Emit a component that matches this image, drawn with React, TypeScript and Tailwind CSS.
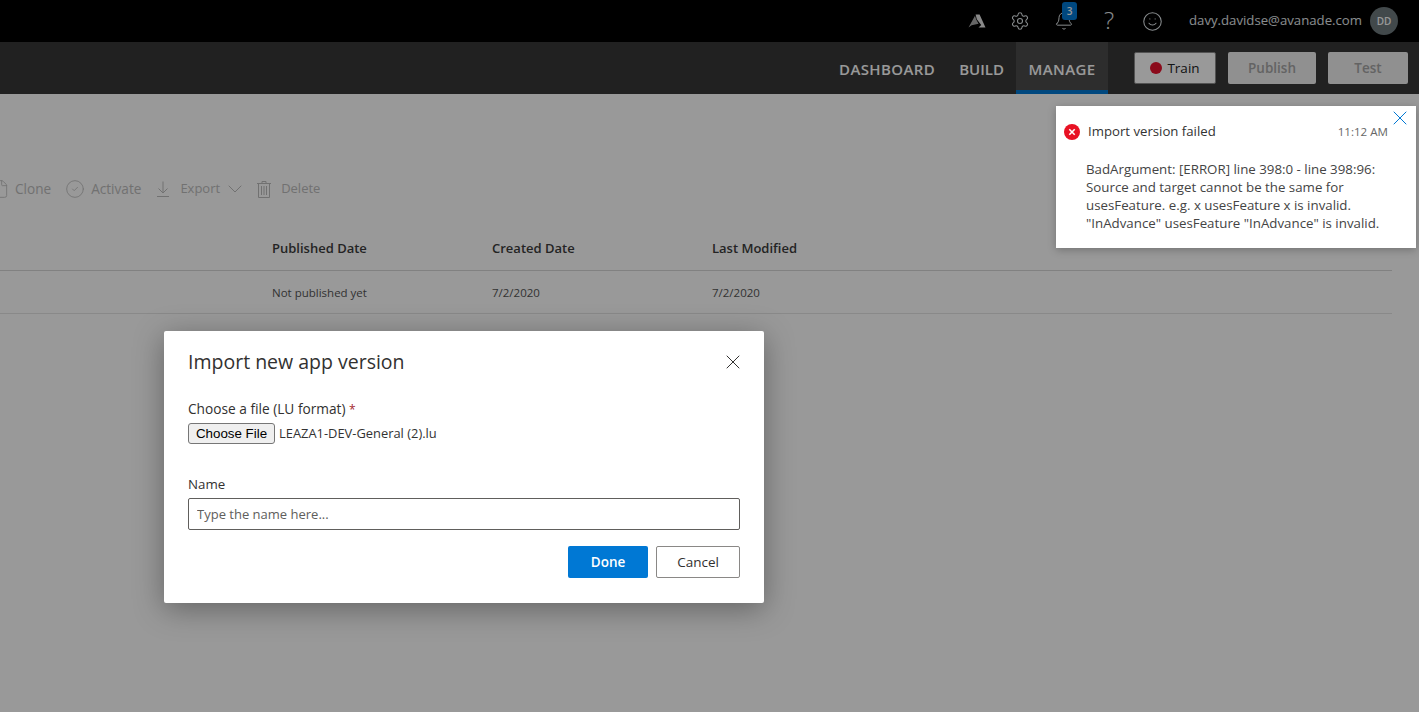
import { Bell, ChevronDown, CircleCheck, File, Settings, Smile, X } from "lucide-react"

const font = { fontFamily: '"Open Sans", "Noto Sans", sans-serif' }

function AzureLogo() {
  return (
    <svg width="18" height="14" viewBox="0 0 18 14" fill="#e4e4e4">
      <path d="M7.6 0.5 L11.6 0.5 L17.5 13.5 L10.5 13.5 L13.2 11 L8.8 5.2 Z" />
      <path d="M7 1.8 L8.2 5.4 L10.6 9.8 L3.6 11.2 L0.5 13.5 Z" opacity="0.75" />
    </svg>
  )
}

function ExportArrow() {
  return (
    <svg width="12" height="16" viewBox="0 0 12 16" fill="none" stroke="currentColor" strokeWidth="1" className="mr-[11px]">
      <path d="M6 0.5 V12 M1.5 7.5 L6 12 L10.5 7.5 M0 15.5 H12" />
    </svg>
  )
}

function TrashIcon() {
  return (
    <svg width="14" height="17" viewBox="0 0 14 17" fill="none" stroke="currentColor" strokeWidth="1" className="mr-[10px]">
      <path d="M0 2.5 H14 M5 2.5 V0.5 H9 V2.5 M1.5 2.5 V16.5 H12.5 V2.5 M4.5 5 V14 M7 5 V14 M9.5 5 V14" />
    </svg>
  )
}

function TopBar() {
  return (
    <div className="h-[42px] bg-black flex items-center justify-end text-[#e4eaed]">
      <div className="w-[18px] flex justify-center mr-[24px]"><AzureLogo /></div>
      <Settings size={20} strokeWidth={1.3} className="mr-[24px]" />
      <div className="relative mr-[28px]">
        <Bell size={20} strokeWidth={1.2} />
        <span className="absolute -top-[9px] left-[8px] w-[15px] h-[18px] rounded-[3px] bg-[#0078d4] text-white text-[10px] font-semibold flex items-center justify-center">3</span>
      </div>
      <span className="w-[14px] text-center text-[24px] leading-[24px] font-light -mt-[2px] mr-[26px]">?</span>
      <Smile size={21} strokeWidth={1.2} className="mr-[26px]" />
      <span className="text-[13.2px] mr-[8px]">davy.davidse@avanade.com</span>
      <div className="w-[28px] h-[28px] rounded-full bg-[#6e7a7e] text-white text-[10px] font-semibold flex items-center justify-center mr-[21px]">DD</div>
    </div>
  )
}

function NavBar() {
  return (
    <div className="h-[52px] bg-[#383838] flex items-stretch justify-end">
      <div className="flex items-center text-[15px] font-semibold text-white">
        <span className="px-3 mt-[3px] tracking-[0.4px]">DASHBOARD</span>
        <span className="px-3 mt-[3px]">BUILD</span>
        <div className="h-full w-[92px] bg-[#4c4c4c] border-b-4 border-[#0078d4] pt-[6px] flex items-center justify-center tracking-[0.4px]">MANAGE</div>
      </div>
      <div className="flex items-center gap-3 ml-[26px] mr-[11px]">
        <button className="w-[82px] h-[32px] bg-white border border-[#8a8a8a] rounded-[2px] flex items-center justify-center gap-[5px] text-[13.5px] font-medium text-[#222]">
          <span className="w-3 h-3 rounded-full bg-[#e8112d]" />
          Train
        </button>
        <button className="w-[88px] h-[32px] bg-[#f0f0f0] rounded-[2px] text-[13.5px] font-semibold text-[#a6a6a6]">Publish</button>
        <button className="w-[80px] h-[32px] bg-[#f0f0f0] rounded-[2px] text-[13.5px] font-semibold text-[#a6a6a6]">Test</button>
      </div>
    </div>
  )
}

function Toolbar() {
  return (
    <div className="flex items-center h-5 mt-[85px] -ml-[10px] text-[13.6px] text-[#bdbdbd]">
      <File size={20} strokeWidth={1} className="mr-[5px]" />
      <span className="mr-[14px]">Clone</span>
      <CircleCheck size={20} strokeWidth={1} className="mr-[6px]" />
      <span className="mr-[16px]">Activate</span>
      <ExportArrow />
      <span className="text-[13px] mr-[3px]">Export</span>
      <ChevronDown size={24} strokeWidth={1} className="mr-[10px]" />
      <TrashIcon />
      <span className="text-[13px]">Delete</span>
    </div>
  )
}

function VersionTable() {
  return (
    <div className="w-[1392px] mt-[26px]">
      <div className="h-[46px] pt-[2px] pl-[272px] grid grid-cols-[220px_220px_1fr] items-center border-b border-[#d8d8d8] text-[13px] font-semibold text-[#3c3c3c]">
        <span>Published Date</span>
        <span>Created Date</span>
        <span>Last Modified</span>
      </div>
      <div className="h-[43px] pt-[1px] pl-[272px] grid grid-cols-[220px_220px_1fr] items-center border-b border-[#e4e4e4] text-[11.5px] text-[#555]">
        <span>Not published yet</span>
        <span>7/2/2020</span>
        <span>7/2/2020</span>
      </div>
    </div>
  )
}

function ImportDialog() {
  return (
    <div className="absolute left-[164px] top-[331px] w-[600px] h-[272px] bg-white rounded-[2px] shadow-[0_6px_30px_rgba(0,0,0,0.35)] px-6 pt-[18px] text-[#323130]">
      <div className="flex items-center justify-between h-[26px]">
        <h2 className="text-[19.5px] font-medium text-[#323130]">Import new app version</h2>
        <X size={24} strokeWidth={1} className="-mr-[5px]" />
      </div>
      <div className="mt-[24px] text-[13.7px] font-medium">
        Choose a file (LU format) <span className="text-[12px] text-[#a4262c]">*</span>
      </div>
      <div className="flex items-center mt-[3px]">
        <button className="h-[21px] w-[87px] bg-[#efefef] border border-[#767676] rounded-[3px] text-[13.33px] text-black" style={{ fontFamily: '"Liberation Sans", sans-serif' }}>Choose File</button>
        <span className="ml-1 mt-px text-[12.9px] text-[#333]">LEAZA1-DEV-General (2).lu</span>
      </div>
      <div className="mt-[31px] text-[13.3px] font-medium">Name</div>
      <input
        readOnly
        placeholder="Type the name here..."
        className="mt-[4px] block w-full h-[32px] px-2 border border-[#605e5c] rounded-[2px] text-[13px] outline-none placeholder:text-[#605e5c]"
      />
      <div className="flex justify-end gap-2 mt-4">
        <button className="w-[80px] h-[32px] bg-[#0078d4] rounded-[2px] text-white text-[13.5px] font-semibold">Done</button>
        <button className="w-[84px] h-[32px] bg-white border border-[#8a8886] rounded-[2px] text-[13.5px] text-[#323130]">Cancel</button>
      </div>
    </div>
  )
}

function ErrorToast() {
  return (
    <div className="absolute left-[1056px] top-[106px] w-[360px] h-[142px] bg-white shadow-[0_2px_8px_rgba(0,0,0,0.25)] text-[#333]">
      <X size={24} strokeWidth={1} className="absolute right-[4px] top-0 text-[#0078d4]" />
      <div className="flex items-center h-[16px] mt-[18px] ml-[8px] mr-[28px]">
        <svg width="16" height="16" viewBox="0 0 16 16" className="shrink-0">
          <circle cx="8" cy="8" r="8" fill="#e81123" />
          <path d="M5.3 5.3 L10.7 10.7 M10.7 5.3 L5.3 10.7" stroke="#fff" strokeWidth="1.6" />
        </svg>
        <span className="ml-[8px] text-[13.2px]">Import version failed</span>
        <span className="ml-auto text-[11.6px] text-[#666]">11:12 AM</span>
      </div>
      <p className="mt-[20px] ml-[30px] text-[13.3px] leading-[18px] text-[#444] whitespace-pre-line">
        {"BadArgument: [ERROR] line 398:0 - line 398:96:\nSource and target cannot be the same for\nusesFeature. e.g. x usesFeature x is invalid.\n\"InAdvance\" usesFeature \"InAdvance\" is invalid."}
      </p>
    </div>
  )
}

export default function App() {
  return (
    <div className="relative h-[712px] overflow-hidden bg-white" style={font}>
      <TopBar />
      <NavBar />
      <Toolbar />
      <VersionTable />
      <div className="absolute inset-0 bg-black/40" />
      <ImportDialog />
      <ErrorToast />
    </div>
  )
}
